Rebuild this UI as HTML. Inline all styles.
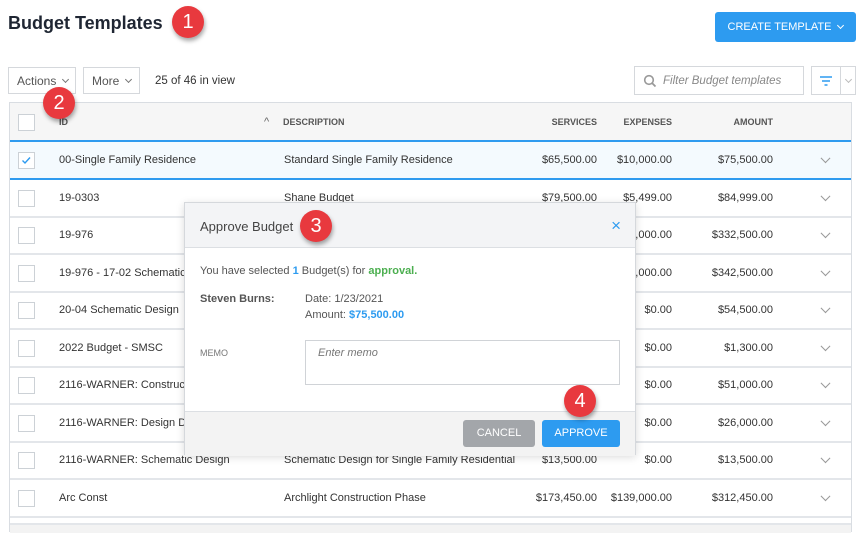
<!DOCTYPE html>
<html><head><meta charset="utf-8"><style>
*{box-sizing:border-box;margin:0;padding:0}
body{width:863px;height:532px;overflow:hidden;background:#fff;font-family:"Liberation Sans",sans-serif;color:#333;position:relative;font-size:11px}
.abs{position:absolute}
h1{position:absolute;left:8px;top:13px;font-size:18px;font-weight:bold;color:#1f2633}
.btn{position:absolute;border:1px solid #d5d8dc;background:#fff;color:#555;font-size:12px;display:flex;align-items:center;padding-left:8px}
.chev{display:inline-block;width:5px;height:5px;border-right:1.2px solid #777;border-bottom:1.2px solid #777;transform:rotate(45deg);margin-left:7px;margin-top:-3px}
.table{position:absolute;left:9px;top:102px;width:843px;height:430px;border-left:1px solid #d9dde2;border-right:1px solid #d9dde2;border-top:1px solid #d9dde2}
.hdr{position:absolute;left:0;top:0;width:100%;height:39px;background:#f6f6f6;border-bottom:2px solid #2f9bef;font-size:9px;font-weight:bold;color:#555}
.row{position:absolute;left:0;width:100%;height:37.5px;border-bottom:2px solid #e3e6ea;font-size:11px;color:#333}
.row span,.hdr span{position:absolute;top:50%;transform:translateY(-50%);white-space:nowrap}
.cb{position:absolute;left:8px;top:50%;margin-top:-8px;width:17px;height:17px;border:1px solid #ccd1d6;background:#fff}
.rc{position:absolute;right:22px;top:50%;width:7px;height:7px;border-right:1.2px solid #999;border-bottom:1.2px solid #999;transform:translateY(-75%) rotate(45deg)}
.badge{position:absolute;width:32px;height:32px;border-radius:50%;background:#e8393e;color:#fff;font-size:20px;text-align:center;line-height:32px;box-shadow:1px 3px 4px rgba(0,0,0,.35);z-index:20}
</style></head><body>
<h1>Budget Templates</h1>
<div class="badge" style="left:172px;top:6px">1</div>
<div class="abs" style="left:715px;top:12px;width:141px;height:30px;background:#2d9bf0;border-radius:3px;color:#fff;font-size:11px;display:flex;align-items:center;justify-content:center">CREATE TEMPLATE<span class="chev" style="border-color:#fff"></span></div>
<div class="btn" style="left:8px;top:67px;width:68px;height:27px">Actions<span class="chev"></span></div>
<div class="btn" style="left:83px;top:67px;width:57px;height:27px">More<span class="chev"></span></div>
<div class="abs" style="left:155px;top:75px;font-size:11.5px;color:#333">25 of 46 in view</div>
<div class="btn" style="left:634px;top:66px;width:170px;height:29px;color:#888;font-style:italic;font-size:11.5px">
<svg width="14" height="14" viewBox="0 0 14 14" style="margin-right:6px"><circle cx="6" cy="6" r="4.3" fill="none" stroke="#999" stroke-width="1.6"/><path d="M9 9l3.5 3.5" stroke="#999" stroke-width="1.8"/></svg>Filter Budget templates</div>
<div class="btn" style="left:811px;top:66px;width:45px;height:29px;padding:0">
<svg width="28" height="28" viewBox="0 0 28 28"><path d="M8 10h12M10 14h8M12.5 18h3" stroke="#2d9bf0" stroke-width="1.6"/></svg>
<div style="width:1px;height:27px;background:#d5d8dc"></div><span class="chev" style="margin-left:5px;border-color:#bbb"></span></div>
<div class="table">
<div class="hdr"><div class="cb"></div><span style="left:49px">ID</span><span style="left:254px;font-size:11px;font-weight:normal;color:#666">^</span><span style="left:273px">DESCRIPTION</span><span style="right:254px">SERVICES</span><span style="right:179px">EXPENSES</span><span style="right:78px">AMOUNT</span></div>
<div class="row" style="top:39px;background:#f4fafe;border-bottom-color:#2f9bef"><div class="cb" style="border-color:#ccd1d6"><svg width="15" height="15" viewBox="0 0 15 15"><path d="M3.5 7.5l2.5 2.5 5-5.5" fill="none" stroke="#2d9bf0" stroke-width="1.4"/></svg></div><span style="left:49px">00-Single Family Residence</span><span style="left:274px">Standard Single Family Residence</span><span style="right:254px">$65,500.00</span><span style="right:179px">$10,000.00</span><span style="right:78px">$75,500.00</span><div class="rc"></div></div>
<div class="row" style="top:77px"><div class="cb"></div><span style="left:49px">19-0303</span><span style="left:274px">Shane Budget</span><span style="right:254px">$79,500.00</span><span style="right:179px">$5,499.00</span><span style="right:78px">$84,999.00</span><div class="rc"></div></div>
<div class="row" style="top:114.5px"><div class="cb"></div><span style="left:49px">19-976</span><span style="right:179px">$10,000.00</span><span style="right:78px">$332,500.00</span><div class="rc"></div></div>
<div class="row" style="top:152px"><div class="cb"></div><span style="left:49px">19-976 - 17-02 Schematic</span><span style="right:179px">$10,000.00</span><span style="right:78px">$342,500.00</span><div class="rc"></div></div>
<div class="row" style="top:189.5px"><div class="cb"></div><span style="left:49px">20-04 Schematic Design</span><span style="right:179px">$0.00</span><span style="right:78px">$54,500.00</span><div class="rc"></div></div>
<div class="row" style="top:227px"><div class="cb"></div><span style="left:49px">2022 Budget - SMSC</span><span style="right:179px">$0.00</span><span style="right:78px">$1,300.00</span><div class="rc"></div></div>
<div class="row" style="top:264.5px"><div class="cb"></div><span style="left:49px">2116-WARNER: Construction</span><span style="right:179px">$0.00</span><span style="right:78px">$51,000.00</span><div class="rc"></div></div>
<div class="row" style="top:302px"><div class="cb"></div><span style="left:49px">2116-WARNER: Design Development</span><span style="right:179px">$0.00</span><span style="right:78px">$26,000.00</span><div class="rc"></div></div>
<div class="row" style="top:339.5px"><div class="cb"></div><span style="left:49px">2116-WARNER: Schematic Design</span><span style="left:274px">Schematic Design for Single Family Residential</span><span style="right:254px">$13,500.00</span><span style="right:179px">$0.00</span><span style="right:78px">$13,500.00</span><div class="rc"></div></div>
<div class="row" style="top:377px"><div class="cb"></div><span style="left:49px">Arc Const</span><span style="left:274px">Archlight Construction Phase</span><span style="right:254px">$173,450.00</span><span style="right:179px">$139,000.00</span><span style="right:78px">$312,450.00</span><div class="rc"></div></div>
<div class="abs" style="left:0;top:420px;width:100%;height:10px;background:#f3f3f3;border-top:2px solid #e3e6ea"></div>
</div>
<div class="badge" style="left:43px;top:87px">2</div>
<div class="abs" style="left:184px;top:202px;width:452px;height:253px;background:#fff;border:1px solid #d5d8dc;box-shadow:0 2px 8px rgba(0,0,0,.15);z-index:10">
<div class="abs" style="left:0;top:0;width:100%;height:45px;background:#f3f4f6;border-bottom:1px solid #dcdfe3"></div>
<div class="abs" style="left:15px;top:16px;font-size:13px;color:#444">Approve Budget</div>
<div class="abs" style="right:14px;top:13px;font-size:17px;color:#2d9bf0">×</div>
<div class="abs" style="left:15px;top:62px;font-size:11px;color:#555">You have selected <b style="color:#2d9bf0">1</b> Budget(s) for <b style="color:#4caf50">approval.</b></div>
<div class="abs" style="left:15px;top:90px;font-size:11px;color:#555;font-weight:bold">Steven Burns:</div>
<div class="abs" style="left:120px;top:90px;font-size:11px;color:#555">Date: 1/23/2021</div>
<div class="abs" style="left:120px;top:106px;font-size:11px;color:#555">Amount: <b style="color:#2d9bf0">$75,500.00</b></div>
<div class="abs" style="left:15px;top:145px;font-size:9px;color:#777">MEMO</div>
<div class="abs" style="left:120px;top:137px;width:315px;height:45px;border:1px solid #d0d3d7;padding:6px 12px;font-style:italic;color:#777;font-size:11px">Enter memo</div>
<div class="abs" style="left:0;top:208px;width:100%;height:45px;background:#f3f3f3;border-top:1px solid #dcdfe3"></div>
<div class="abs" style="left:278px;top:217px;width:72px;height:27px;background:#a3a6aa;border-radius:3px;color:#fff;font-size:11px;text-align:center;line-height:27px">CANCEL</div>
<div class="abs" style="left:357px;top:217px;width:78px;height:27px;background:#2d9bf0;border-radius:3px;color:#fff;font-size:11px;text-align:center;line-height:27px">APPROVE</div>
</div>
<div class="badge" style="left:300px;top:210px">3</div>
<div class="badge" style="left:564px;top:385px">4</div>
</body></html>
